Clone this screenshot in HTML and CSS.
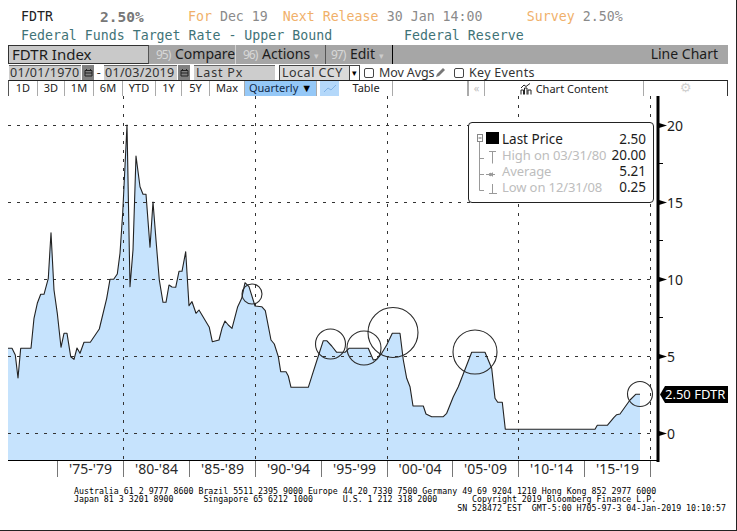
FILE: index.html
```html
<!DOCTYPE html>
<html lang="en">
<head>
<meta charset="utf-8">
<title>FDTR Index Line Chart</title>
<link rel="stylesheet" href="styles.css">
</head>
<body>
<div class="page">
  <header class="quote">
    <div class="quote-line"><span class="q-ticker">FDTR</span><span class="q-last">2.50%</span><span class="q-for orange">For</span><span class="grey"> Dec 19</span><span class="q-next orange">Next Release</span><span class="grey q-date">30 Jan 14:00</span><span class="q-survey orange">Survey</span><span class="grey q-sval">2.50%</span></div>
    <div class="quote-line teal"><span class="q-name">Federal Funds Target Rate - Upper Bound</span><span class="q-src">Federal Reserve</span></div>
  </header>

  <div class="bar">
    <div class="security">FDTR Index</div>
    <div class="cmd cmd-compare"><span class="num">95)</span> Compare</div>
    <div class="cmd cmd-actions"><span class="num">96)</span> Actions <span class="caret">&#9662;</span></div>
    <div class="cmd cmd-edit"><span class="num">97)</span> Edit <span class="caret">&#9662;</span></div>
    <div class="bar-title">Line Chart</div>
  </div>

  <div class="params">
    <div class="field f-date">01/01/1970</div>
    <div class="cal"><svg width="9" height="9" viewBox="0 0 9 9"><path d="M1 2.5h7v5.5h-7zM1 5h7M2.5 1v1.500M6.500 1v1.500" fill="none" stroke="#222"/></svg></div>
    <div class="dash">-</div>
    <div class="field f-date2">01/03/2019</div>
    <div class="cal"><svg width="9" height="9" viewBox="0 0 9 9"><path d="M1 2.5h7v5.5h-7zM1 5h7M2.500 1v1.500M6.500 1v1.500" fill="none" stroke="#222"/></svg></div>
    <div class="field f-px">Last Px</div>
    <div class="field f-ccy">Local CCY</div>
    <div class="drop">&#9662;</div>
    <label class="check c-mov"><span class="box"></span>Mov Avgs</label>
    <svg class="pencil" width="11" height="11" viewBox="0 0 11 11"><path d="M1 10l1-3 6-6 2 2-6 6z" fill="#777"/></svg>
    <label class="check c-key"><span class="box"></span>Key Events</label>
  </div>

  <nav class="tabs">
    <div class="tab">1D</div>
    <div class="tab">3D</div>
    <div class="tab">1M</div>
    <div class="tab">6M</div>
    <div class="tab">YTD</div>
    <div class="tab">1Y</div>
    <div class="tab">5Y</div>
    <div class="tab">Max</div>
    <div class="tab tab-on">Quarterly <span class="tab-arrow">&#9660;</span></div>
    <div class="tab tab-icon"><svg width="14" height="9" viewBox="0 0 14 9"><path d="M1 8l4-4 3 2 5-5" fill="none" stroke="#7fb2e6"/></svg></div>
    <div class="tab">Table</div>
    <div class="tab"></div>
    <div class="tab tab-back">&#171;</div>
    <div class="tab tab-content"><svg width="12" height="12" viewBox="0 0 12 12"><path d="M1 11.500V7h2.500v4.500M4.500 11.500V5H7v6.500M8 11.500V7h3v4.500M1 5l3-3 2 1.500L10 .5" fill="none" stroke="#222"/></svg>Chart Content</div>
    <div class="tab tab-gear">&#9881;</div>
  </nav>

  <main class="chart">
    <svg class="plot" width="737" height="382" viewBox="0 96 737 382">
      <polygon class="area" points="8,460 8,348.3 12,348.3 15.3,355 18,378 20.7,348.3 31,348.3 34,318.3 37.3,303.3 40.7,294.3 44,294.3 48.3,278.3 51,232.7 54,290 57.3,313.3 61,347.3 64,333.3 67,333.3 70.7,356.7 74,359.3 77,348 80,353.3 84,342.3 90.3,342.3 99.3,329 106.7,298.3 110,279.3 113.7,279.3 117.3,274 120,253.3 122.7,213.3 127,125 130,286.7 133,250 136,156 140,186.7 143,194.3 146,194.3 150,247.3 153,202 156,240 159.3,280 163,302.3 166,302.3 169,285 172,287 175.7,287.3 179,271.3 182,271.3 185.7,251.7 189,305.7 192,301.7 196,313.3 199,310 206,321.7 209.3,327.3 212.3,341.7 219,340 222,328.3 225,321 228.3,325 232,328.3 237.7,306.7 241.7,298.3 245,282.7 249,286.7 255,306 261.7,306.7 265.3,310.7 271,340 274.3,344 278.3,356.7 280.7,371.7 286,371.7 288.3,376 291,387.3 308.3,387.3 311.7,376.7 318.3,356 323.3,340.7 326.7,340.7 331.7,346 336.7,352.3 345,352.3 349,348.3 368.3,348.3 373.3,360 376.7,359.3 381.7,353.3 386.7,345 392.3,333.3 400,333.3 403.3,360 406.7,378.3 410,386.7 413,406 423.3,406 426,414 431.7,416.7 443.3,416.7 446.7,413.3 453.3,396.7 458.3,386.7 471.7,352.3 485,352.3 491.7,368.3 495,398.3 497.7,402.3 502.3,402.3 505.3,429.3 595,429.3 597.3,425.3 607.3,425.3 614,417.3 616.7,414.7 620,414 630,400 635.7,394.3 640,394.3 640,460"/>
      <g class="grid">
        <line x1="8" x2="656" y1="125.500" y2="125.500"/>
        <line x1="8" x2="656" y1="202.500" y2="202.500"/>
        <line x1="8" x2="656" y1="279.500" y2="279.500"/>
        <line x1="8" x2="656" y1="356.500" y2="356.500"/>
        <line x1="8" x2="656" y1="433.500" y2="433.500"/>
        <line x1="123.500" x2="123.500" y1="96" y2="460"/>
        <line x1="255.500" x2="255.500" y1="96" y2="460"/>
        <line x1="387.500" x2="387.500" y1="96" y2="460"/>
        <line x1="518.500" x2="518.500" y1="96" y2="460"/>
        <line x1="650.500" x2="650.500" y1="96" y2="460"/>
      </g>
      <polyline class="price" points="8,348.3 12,348.3 15.3,355 18,378 20.7,348.3 31,348.3 34,318.3 37.3,303.3 40.7,294.3 44,294.3 48.3,278.3 51,232.7 54,290 57.3,313.3 61,347.3 64,333.3 67,333.3 70.7,356.7 74,359.3 77,348 80,353.3 84,342.3 90.3,342.3 99.3,329 106.7,298.3 110,279.3 113.7,279.3 117.3,274 120,253.3 122.7,213.3 127,125 130,286.7 133,250 136,156 140,186.7 143,194.3 146,194.3 150,247.3 153,202 156,240 159.3,280 163,302.3 166,302.3 169,285 172,287 175.7,287.3 179,271.3 182,271.3 185.7,251.7 189,305.7 192,301.7 196,313.3 199,310 206,321.7 209.3,327.3 212.3,341.7 219,340 222,328.3 225,321 228.3,325 232,328.3 237.7,306.7 241.7,298.3 245,282.7 249,286.7 255,306 261.7,306.7 265.3,310.7 271,340 274.3,344 278.3,356.7 280.7,371.7 286,371.7 288.3,376 291,387.3 308.3,387.3 311.7,376.7 318.3,356 323.3,340.7 326.7,340.7 331.7,346 336.7,352.3 345,352.3 349,348.3 368.3,348.3 373.3,360 376.7,359.3 381.7,353.3 386.7,345 392.3,333.3 400,333.3 403.3,360 406.7,378.3 410,386.7 413,406 423.3,406 426,414 431.7,416.7 443.3,416.7 446.7,413.3 453.3,396.7 458.3,386.7 471.7,352.3 485,352.3 491.7,368.3 495,398.3 497.7,402.3 502.3,402.3 505.3,429.3 595,429.3 597.3,425.3 607.3,425.3 614,417.3 616.7,414.7 620,414 630,400 635.7,394.3 640,394.3"/>
      <g class="rings">
        <circle cx="252" cy="294" r="10"/>
        <circle cx="330.500" cy="344" r="15"/>
        <circle cx="364" cy="348" r="17"/>
        <circle cx="393" cy="332.500" r="25"/>
        <circle cx="475" cy="352" r="22"/>
        <circle cx="640" cy="394" r="12.500"/>
      </g>
      <line class="x-axis" x1="8" x2="658" y1="460.500" y2="460.500"/>
      <line class="y-axis" x1="658" x2="658" y1="96" y2="462"/>
      <g class="ticks">
        <line x1="57.500" x2="57.500" y1="461" y2="477"/>
        <line x1="123.500" x2="123.500" y1="461" y2="477"/>
        <line x1="189.500" x2="189.500" y1="461" y2="477"/>
        <line x1="255.500" x2="255.500" y1="461" y2="477"/>
        <line x1="321.500" x2="321.500" y1="461" y2="477"/>
        <line x1="387.500" x2="387.500" y1="461" y2="477"/>
        <line x1="452.500" x2="452.500" y1="461" y2="477"/>
        <line x1="518.500" x2="518.500" y1="461" y2="477"/>
        <line x1="584.500" x2="584.500" y1="461" y2="477"/>
        <line x1="650.500" x2="650.500" y1="461" y2="477"/>
      </g>
      <g class="y-marks">
        <polygon points="659,123 659,128 667,125.500"/>
        <polygon points="659,200 659,205 667,202.500"/>
        <polygon points="659,277 659,282 667,279.500"/>
        <polygon points="659,354 659,359 667,356.500"/>
        <polygon points="659,431 659,436 667,433.500"/>
        <rect x="659" y="163" width="4" height="1"/>
        <rect x="659" y="240" width="4" height="1"/>
        <rect x="659" y="317" width="4" height="1"/>
      </g>
      <g class="y-labels">
        <text x="667" y="131">20</text>
        <text x="667" y="208">15</text>
        <text x="667" y="285">10</text>
        <text x="667" y="362">5</text>
        <text x="667" y="439">0</text>
      </g>
      <g class="x-labels">
        <text x="90.500" y="474">'75-'79</text>
        <text x="156.500" y="474">'80-'84</text>
        <text x="222.500" y="474">'85-'89</text>
        <text x="288.500" y="474">'90-'94</text>
        <text x="354.500" y="474">'95-'99</text>
        <text x="420" y="474">'00-'04</text>
        <text x="485.500" y="474">'05-'09</text>
        <text x="551.500" y="474">'10-'14</text>
        <text x="617.500" y="474">'15-'19</text>
      </g>
    </svg>

    <aside class="legend">
      <svg class="tree" width="22" height="64" viewBox="0 0 22 64">
        <path d="M2.500 11V59.500H7M2.500 27.500H7M2.500 43.500H7" fill="none" stroke="#999"/>
        <rect x=".5" y="3.500" width="5" height="7" fill="#fff" stroke="#888"/>
        <path d="M1.500 7H4.500" stroke="#666"/>
        <rect x="9" y="1" width="13" height="12" fill="#000"/>
        <path d="M12 20.500h7M15.500 20.500v12M9 43.500h9M15.500 41.500v4M12 62.500h8M15.500 53v9.500" fill="none" stroke="#999"/>
        <circle cx="13.500" cy="43.500" r="1.800" fill="#999"/>
      </svg>
      <div class="legend-rows">
        <div class="lrow lrow-main"><span>Last Price</span><span class="val">2.50</span></div>
        <div class="lrow"><span>High on 03/31/80</span><span class="val">20.00</span></div>
        <div class="lrow"><span>Average</span><span class="val">5.21</span></div>
        <div class="lrow"><span>Low on 12/31/08</span><span class="val">0.25</span></div>
      </div>
    </aside>

    <div class="tag">2.50 FDTR</div>
  </main>

  <footer class="legal">Australia 61 2 9777 8600 Brazil 5511 2395 9000 Europe 44 20 7330 7500 Germany 49 69 9204 1210 Hong Kong 852 2977 6000
Japan 81 3 3201 8900      Singapore 65 6212 1000      U.S. 1 212 318 2000       Copyright 2019 Bloomberg Finance L.P.
                                                                             SN 528472 EST  GMT-5:00 H705-97-3 04-Jan-2019 10:10:57</footer>
</div>
</body>
</html>
```

FILE: styles.css
```css
* { box-sizing: border-box; }
html, body { margin: 0; padding: 0; background: #fff; }

.page {
  width: 737px;
  height: 531px;
  padding-top: 8px;
  border-right: 1px solid #222;
  border-bottom: 1px solid #222;
  overflow: hidden;
  font-family: "Noto Sans", sans-serif;
  color: #1c1c1c;
}

/* Quote header */
.quote { padding-left: 21px; font-family: "DejaVu Sans Mono", monospace; font-size: 13.25px; height: 37px; }
.quote-line { display: flex; height: 18.500px; line-height: 18px; white-space: pre; }
.q-ticker { width: 79px; color: #222; }
.q-last { width: 88px; color: #777; font-weight: bold; font-size: 14.500px; }
.q-next { margin-left: 15px; width: 104px; }
.q-date { width: 140px; }
.q-survey { width: 56px; }
.orange { color: #f0b06a; }
.grey { color: #8a8a8a; }
.teal { color: #3f7377; }
.q-name { width: 383px; }

/* Command bar */
.bar {
  display: flex;
  width: 720px;
  height: 19px;
  margin-left: 8px;
  background: #a6a6a6;
  font-size: 14px;
  line-height: 18px;
  white-space: nowrap;
}
.security { width: 141px; padding-left: 3px; background: #c9c9c9; border: 1px solid #333; border-right-color: #555; font-size: 15px; line-height: 16px; }
.cmd { padding-left: 6px; border-right: 1px solid #d4d4d4; overflow: hidden; }
.cmd-compare { width: 87px; padding-left: 7px; }
.cmd-actions { width: 90px; border-right-color: #555; padding-left: 7px; }
.cmd-edit { width: 67px; border-right-color: #000; padding-left: 5px; }
.num { color: #d8d8d8; font-size: 12px; letter-spacing: -1px; margin-right: 1px; }
.caret { color: #ccc; font-size: 9px; }
.bar-title { flex: 1; text-align: right; padding-right: 10px; }

/* Parameter row */
.params {
  display: flex;
  align-items: center;
  height: 15px;
  margin: 1px 0 0 9px;
  font-size: 12.500px;
  letter-spacing: .3px;
  line-height: 14px;
  white-space: nowrap;
  color: #333;
}
.field { height: 15px; background: #cdcdcd; padding-left: 4px; border-top: 1px solid #666; }
.f-date { width: 72px; padding-left: 1px; }
.f-date2 { width: 73px; padding-left: 1px; }
.cal { width: 12px; height: 15px; background: #808080; display: flex; align-items: center; justify-content: center; margin-left: 1px; }
.dash { width: 10px; text-align: center; }
.f-px { width: 81px; margin-left: 4px; padding-left: 2px; letter-spacing: .8px; }
.f-ccy { width: 70px; margin-left: 4px; background: #dadada; border: 1px solid #444; border-right: 0; border-bottom: 0; padding-left: 2px; letter-spacing: .5px; }
.drop { width: 11px; height: 15px; border: 1px solid #444; border-bottom: 0; font-size: 9px; text-align: center; background: #fff; color: #000; margin-right: 4px; }
.check { display: flex; align-items: center; }
.box { flex: none; width: 10px; height: 10px; border: 1px solid #444; border-radius: 2px; background: #fff; margin-right: 5px; }
.pencil { flex: none; margin: 0 8px 0 3px; }
.c-mov { flex: none; width: 68px; letter-spacing: -.1px; }

/* Tab row */
.tabs {
  display: grid;
  grid-template-columns: 29px 27px 29px 29px 33px 26px 28px 35px 72px 23px 53px 75px 17px 159px 83px;
  width: 720px;
  height: 16px;
  margin-left: 8px;
  border-top: 1px solid #222;
  border-left: 1px solid #555;
  border-right: 1px solid #333;
  font-size: 11px;
  line-height: 14px;
  white-space: nowrap;
}
.tab { border-right: 1px solid #aaa; text-align: center; overflow: hidden; color: #222; }
.tab-on { background: #95c8f7; color: #102a4a; }
.tab-arrow { color: #000; }
.tab-icon { background: #b4d8fa; margin-left: 3px; margin-right: 1px; border-right: 0; display: flex; align-items: center; justify-content: center; }
.tab-back { color: #c2c2c2; font-size: 11px; line-height: 14px; border-left: 1px solid #aaa; overflow: visible; }
.tab-content { display: flex; align-items: center; justify-content: center; gap: 4px; }
.tab-gear { border-right: 0; color: #cfcfcf; font-size: 13px; line-height: 14px; font-family: "DejaVu Sans", sans-serif; }

/* Chart */
.chart { position: relative; height: 382px; }
.plot { display: block; }
.area { fill: #c6e3fd; stroke: none; }
.grid line { stroke: #333; stroke-width: 1; stroke-dasharray: 3 6; }
.price { fill: none; stroke: #222; stroke-width: 1.100; stroke-linejoin: round; }
.rings circle { fill: none; stroke: #2b2b2b; stroke-width: 1.100; }
.x-axis { stroke: #000; stroke-width: 1; }
.y-axis { stroke: #000; stroke-width: 3; }
.ticks line { stroke: #777; stroke-width: 1; }
.y-marks { fill: #000; }
.y-labels text { font-family: "Noto Sans", sans-serif; font-size: 14px; fill: #1c1c1c; }
.x-labels text { font-family: "Noto Sans", sans-serif; font-size: 14px; fill: #2a2a2a; text-anchor: middle; }

.legend {
  position: absolute;
  left: 468px;
  top: 26px;
  width: 186px;
  height: 81px;
  display: flex;
  gap: 3px;
  padding: 8px 7px 0 8px;
  background: #fff;
  border: 1.500px solid #222;
  border-radius: 4px;
}
.tree { flex: none; }
.legend-rows { flex: 1; font-size: 13px; line-height: 16px; color: #bdbdbd; white-space: nowrap; }
.lrow { display: flex; justify-content: space-between; height: 16px; letter-spacing: -.1px; }
.lrow-main { color: #1c1c1c; font-size: 13.500px; letter-spacing: 0; }
.val { color: #1c1c1c; font-size: 13.500px; letter-spacing: 0; }

.tag {
  position: absolute;
  left: 660px;
  top: 290px;
  width: 68px;
  height: 17px;
  padding-left: 5px;
  background: #000;
  color: #fff;
  font-size: 13px;
  line-height: 16px;
  white-space: nowrap;
  clip-path: polygon(0 50%, 5px 0, 100% 0, 100% 100%, 5px 100%);
}

/* Footer */
.legal {
  margin: 9px 0 0 74px;
  font-family: "DejaVu Sans Mono", monospace;
  font-size: 8.280px;
  line-height: 8.300px;
  white-space: pre;
  color: #000;
}
```
